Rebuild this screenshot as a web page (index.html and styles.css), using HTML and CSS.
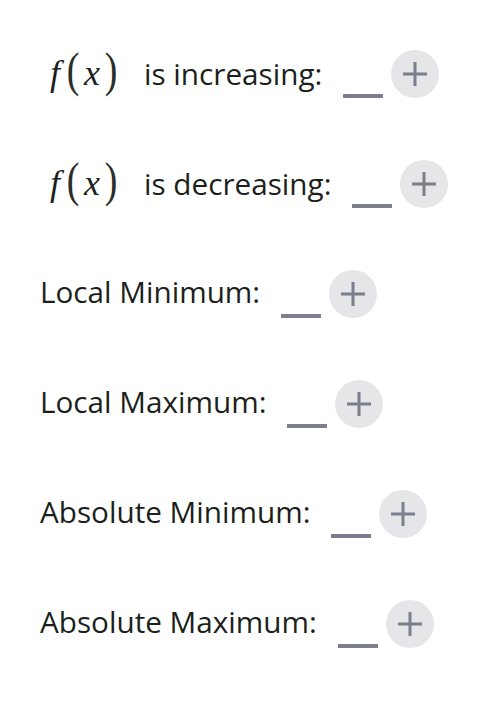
FILE: index.html
```html
<!DOCTYPE html>
<html>
<head>
<meta charset="utf-8">
<link rel="stylesheet" href="styles.css">
</head>
<body>
<div class="list">
  <div class="row row-math">
    <span class="label"><span class="math"><i class="mi mf">f</i><span class="paren po">(</span><i class="mi mx">x</i><span class="paren pc">)</span></span>is increasing:</span>
    <span class="blank"></span>
    <button class="add" aria-label="add"><svg viewBox="0 0 24 24" width="24" height="24"><path d="M12 0V24M0 12H24" stroke="#7b7e8c" stroke-width="3" fill="none"/></svg></button>
  </div>
  <div class="row row-math">
    <span class="label"><span class="math"><i class="mi mf">f</i><span class="paren po">(</span><i class="mi mx">x</i><span class="paren pc">)</span></span>is decreasing:</span>
    <span class="blank"></span>
    <button class="add" aria-label="add"><svg viewBox="0 0 24 24" width="24" height="24"><path d="M12 0V24M0 12H24" stroke="#7b7e8c" stroke-width="3" fill="none"/></svg></button>
  </div>
  <div class="row">
    <span class="label">Local Minimum:</span>
    <span class="blank"></span>
    <button class="add" aria-label="add"><svg viewBox="0 0 24 24" width="24" height="24"><path d="M12 0V24M0 12H24" stroke="#7b7e8c" stroke-width="3" fill="none"/></svg></button>
  </div>
  <div class="row">
    <span class="label">Local Maximum:</span>
    <span class="blank"></span>
    <button class="add" aria-label="add"><svg viewBox="0 0 24 24" width="24" height="24"><path d="M12 0V24M0 12H24" stroke="#7b7e8c" stroke-width="3" fill="none"/></svg></button>
  </div>
  <div class="row">
    <span class="label">Absolute Minimum:</span>
    <span class="blank"></span>
    <button class="add" aria-label="add"><svg viewBox="0 0 24 24" width="24" height="24"><path d="M12 0V24M0 12H24" stroke="#7b7e8c" stroke-width="3" fill="none"/></svg></button>
  </div>
  <div class="row">
    <span class="label">Absolute Maximum:</span>
    <span class="blank"></span>
    <button class="add" aria-label="add"><svg viewBox="0 0 24 24" width="24" height="24"><path d="M12 0V24M0 12H24" stroke="#7b7e8c" stroke-width="3" fill="none"/></svg></button>
  </div>
</div>
</body>
</html>
```
FILE: styles.css
```css
html, body {
  margin: 0;
  padding: 0;
  background: #ffffff;
}
body {
  font-family: "Open Sans", "Noto Sans", sans-serif;
  color: #1c1f1c;
}
.list {
  display: flex;
  flex-direction: column;
  gap: 62px;
  padding: 50px 0 0 40px;
}
.row {
  display: flex;
  align-items: flex-end;
  height: 48px;
}
.label {
  font-size: 29.7px;
  line-height: 40px;
  margin-bottom: 6px;
  white-space: nowrap;
}
.row-math .label {
  margin-bottom: 4px;
}
.math {
  font-family: "Liberation Serif", "DejaVu Serif", serif;
  font-size: 36px;
  margin-left: 10px;
  margin-right: 26px;
}
.mi {
  font-style: italic;
}
.mf {
  margin-right: 6px;
}
.paren {
  display: inline-block;
  font-size: 42px;
  color: #2a2d2a;
  transform: scale(0.9, 1.15);
  transform-origin: 50% 70%;
}
.po {
  margin-right: 4px;
}
.pc {
  margin-left: 4px;
}
.blank {
  width: 40px;
  height: 4px;
  background: #7b7e8c;
  margin-left: 21px;
}
.add {
  width: 48px;
  height: 48px;
  border-radius: 50%;
  border: none;
  padding: 0;
  margin-left: 8px;
  background: #e6e6e8;
  display: flex;
  align-items: center;
  justify-content: center;
}
.add svg {
  display: block;
}
```
